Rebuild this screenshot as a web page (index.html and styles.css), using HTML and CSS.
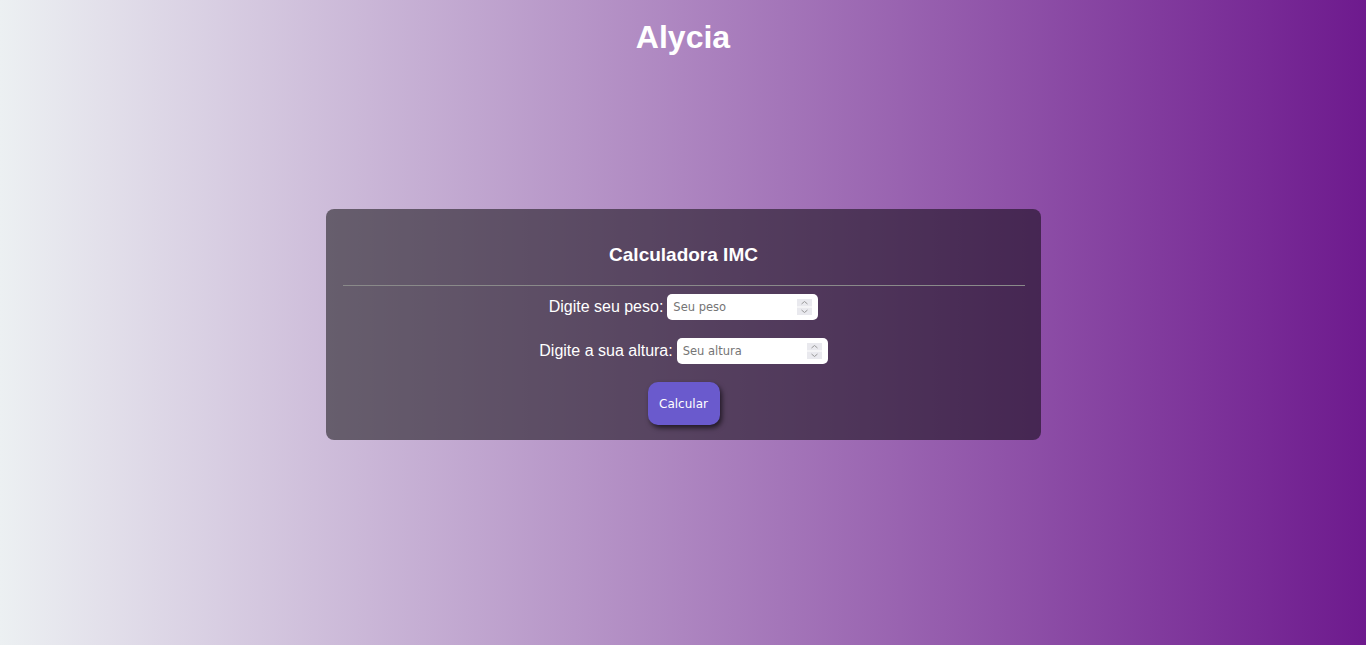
FILE: index.html
```html
<html>
    <head>
        <meta charset="utf-8" />
        <title>Calculadora IMC</title>
        <link rel="stylesheet" href="styles.css">
    </head>
    <body>
        <h1 class="titulo">Alycia</h1>
        <div class="caixa">
            <h3 class="caixa-titulo">Calculadora IMC</h3>
            <hr class="linha">
            <div class="campo">
                <label for="peso">Digite seu peso:</label>
                <span class="entrada">
                    <input type="number" id="peso" placeholder="Seu peso">
                    <svg class="spin" width="15" height="16" viewBox="0 0 15 16">
                        <rect x="0" y="0" width="15" height="7.5" fill="#e9e9ee"/>
                        <rect x="0" y="8.5" width="15" height="7.5" fill="#e9e9ee"/>
                        <path d="M4.5 5 L7.5 2.5 L10.5 5" fill="none" stroke="#9a9a9a" stroke-width="1"/>
                        <path d="M4.5 11 L7.5 13.5 L10.5 11" fill="none" stroke="#9a9a9a" stroke-width="1"/>
                    </svg>
                </span>
            </div>
            <div class="campo">
                <label for="altura">Digite a sua altura:</label>
                <span class="entrada">
                    <input type="number" id="altura" placeholder="Seu altura">
                    <svg class="spin" width="15" height="16" viewBox="0 0 15 16">
                        <rect x="0" y="0" width="15" height="7.5" fill="#e9e9ee"/>
                        <rect x="0" y="8.5" width="15" height="7.5" fill="#e9e9ee"/>
                        <path d="M4.5 5 L7.5 2.5 L10.5 5" fill="none" stroke="#9a9a9a" stroke-width="1"/>
                        <path d="M4.5 11 L7.5 13.5 L10.5 11" fill="none" stroke="#9a9a9a" stroke-width="1"/>
                    </svg>
                </span>
            </div>
            <div class="acoes">
                <button class="btn" id="calcular">Calcular</button>
            </div>
        </div>
    </body>
</html>
```

FILE: styles.css
```css
body {
    margin: 0;
    min-height: 100vh;
    background: linear-gradient(to right, #ecf0f2, #6e1a8e);
    font-family: "Liberation Sans", Arial, sans-serif;
    color: #fff;
}
.titulo {
    margin: 0;
    padding-top: 19px;
    font-size: 32px;
    text-align: center;
}
.caixa {
    width: 715px;
    box-sizing: border-box;
    margin: 153px auto 0;
    padding: 35px 16px 15px 17px;
    background-color: rgba(0, 0, 0, 0.5);
    border-radius: 8px;
}
.caixa-titulo {
    margin: 0;
    font-size: 19px;
    text-align: center;
}
.linha {
    margin: 19px 0 8px;
    border: none;
    border-top: 1px solid #8a8a8a;
    height: 0;
}
.campo {
    display: flex;
    justify-content: center;
    align-items: center;
    gap: 4px;
    margin-bottom: 18px;
    font-size: 16px;
}
.entrada {
    position: relative;
    display: block;
    height: 26px;
}
.entrada input {
    width: 151px;
    height: 26px;
    box-sizing: border-box;
    border: none;
    border-radius: 5px;
    padding: 0 24px 0 6px;
    font-family: "DejaVu Sans", Verdana, sans-serif;
    font-size: 11.5px;
    color: #333;
    background: #fff;
    -moz-appearance: textfield;
}
.entrada input::placeholder {
    color: #757575;
}
.entrada input::-webkit-inner-spin-button,
.entrada input::-webkit-outer-spin-button {
    -webkit-appearance: none;
    margin: 0;
}
.spin {
    position: absolute;
    right: 6px;
    top: 5px;
    pointer-events: none;
}
.acoes {
    display: flex;
    justify-content: center;
}
.btn {
    width: 72px;
    height: 43px;
    border: none;
    border-radius: 10px;
    background-color: #6a5acd;
    color: #fff;
    font-family: "DejaVu Sans", Verdana, sans-serif;
    font-size: 12px;
    box-shadow: 2px 3px 5px rgba(0, 0, 0, 0.6);
    cursor: pointer;
}
```
